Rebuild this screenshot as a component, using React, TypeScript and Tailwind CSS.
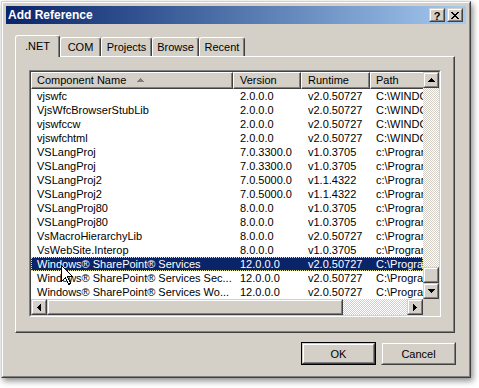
import React from "react";

type Row = [string, string, string, string];
const W = "C:\\WINDOWS";
const P = "c:\\Program";
const S = "C:\\Program";

const rows: Row[] = [
  ["vjswfc", "2.0.0.0", "v2.0.50727", W],
  ["VjsWfcBrowserStubLib", "2.0.0.0", "v2.0.50727", W],
  ["vjswfccw", "2.0.0.0", "v2.0.50727", W],
  ["vjswfchtml", "2.0.0.0", "v2.0.50727", W],
  ["VSLangProj", "7.0.3300.0", "v1.0.3705", P],
  ["VSLangProj", "7.0.3300.0", "v1.0.3705", P],
  ["VSLangProj2", "7.0.5000.0", "v1.1.4322", P],
  ["VSLangProj2", "7.0.5000.0", "v1.1.4322", P],
  ["VSLangProj80", "8.0.0.0", "v1.0.3705", P],
  ["VSLangProj80", "8.0.0.0", "v1.0.3705", P],
  ["VsMacroHierarchyLib", "8.0.0.0", "v2.0.50727", P],
  ["VsWebSite.Interop", "8.0.0.0", "v1.0.3705", P],
  ["Windows® SharePoint® Services", "12.0.0.0", "v2.0.50727", S],
  ["Windows® SharePoint® Services Sec...", "12.0.0.0", "v2.0.50727", S],
  ["Windows® SharePoint® Services Wo...", "12.0.0.0", "v2.0.50727", S],
];

const SELECTED = 12;

function Arrow({ dir }: { dir: "up" | "down" | "left" | "right" }) {
  const widths = [1, 3, 5, 7];
  if (dir === "up" || dir === "down") {
    return (
      <svg width="7" height="4" viewBox="0 0 7 4" shapeRendering="crispEdges">
        {widths.map((w, i) => (
          <rect key={i} x={(7 - w) / 2} y={dir === "up" ? i : 3 - i} width={w} height={1} fill="#000" />
        ))}
      </svg>
    );
  }
  return (
    <svg width="4" height="7" viewBox="0 0 4 7" shapeRendering="crispEdges">
      {widths.map((w, i) => (
        <rect key={i} y={(7 - w) / 2} x={dir === "left" ? i : 3 - i} height={w} width={1} fill="#000" />
      ))}
    </svg>
  );
}

function Raised({ className, children }: { className: string; children?: React.ReactNode }) {
  return (
    <div className={`border border-t-[#d4d0c8] border-l-[#d4d0c8] border-r-[#404040] border-b-[#404040] ${className}`}>
      <div className="w-full h-full border border-t-white border-l-white border-r-[#808080] border-b-[#808080] bg-[#d4d0c8] flex items-center justify-center">
        {children}
      </div>
    </div>
  );
}

function HeaderCell({ w, pl, children }: { w: string; pl: string; children: React.ReactNode }) {
  return (
    <div className={`${w} shrink-0 h-[17px] border border-t-white border-l-white border-r-[#404040] border-b-[#404040]`}>
      <div className={`h-full border-r border-b border-[#808080] flex items-center ${pl} whitespace-nowrap overflow-hidden`}>
        {children}
      </div>
    </div>
  );
}

function Tab({ label, w, selected }: { label: string; w: string; selected?: boolean }) {
  return (
    <div
      className={`${w} ${
        selected ? "h-[22px] -mb-px relative z-10" : "h-[19px]"
      } shrink-0 bg-[#d4d0c8] border-t border-l border-r border-t-white border-l-white border-r-[#404040] rounded-t-[3px] shadow-[inset_-1px_0_#808080] flex items-center justify-center ${
        selected ? "pb-[2px]" : ""
      }`}
    >
      {label}
    </div>
  );
}

function Button({ label, isDefault }: { label: string; isDefault?: boolean }) {
  return isDefault ? (
    <div className="w-[75px] h-[23px] border border-black">
      <Raised className="w-full h-full">
        <span>{label}</span>
      </Raised>
    </div>
  ) : (
    <div className="w-[75px] h-[23px]">
      <Raised className="w-full h-full">
        <span>{label}</span>
      </Raised>
    </div>
  );
}

const track =
  "bg-[image:repeating-conic-gradient(#d4d0c8_0%_25%,#ffffff_0%_50%)] bg-[length:2px_2px]";

export default function App() {
  return (
    <div className="w-[479px] h-[388px] bg-white relative overflow-hidden font-['Liberation_Sans',Arial,sans-serif] text-[11px] text-black leading-[14px]">
      <div className="absolute left-[1px] top-[1px] w-[470px] h-[377px] shadow-[2px_3px_6px_rgba(0,0,0,0.45)] border border-t-[#d4d0c8] border-l-[#d4d0c8] border-r-[#404040] border-b-[#404040]">
        <div className="w-full h-full bg-[#d4d0c8] border border-t-white border-l-white border-r-[#808080] border-b-[#808080] p-[3px] flex flex-col">
          {/* Title bar */}
          <div className="h-[18px] shrink-0 flex items-center bg-linear-to-r from-[#0a246a] to-[#a6caf0] pl-[2px] pr-[3px]">
            <span className="text-white font-bold text-[12px] leading-[14px]">Add Reference</span>
            <div className="ml-auto flex gap-[2px]">
              <Raised className="w-[16px] h-[14px]">
                <span className="font-bold text-[11px] leading-[10px] mt-[1px]">?</span>
              </Raised>
              <Raised className="w-[16px] h-[14px]">
                <svg width="8" height="7" viewBox="0 0 8 7" shapeRendering="crispEdges">
                  {[0, 1, 2, 3, 4, 5, 6].map((y) => {
                    const xs = [[0, 6], [1, 5], [2, 4], [3, 3], [2, 4], [1, 5], [0, 6]][y];
                    return (
                      <g key={y}>
                        <rect x={xs[0]} y={y} width={2} height={1} fill="#000" />
                        {xs[0] !== xs[1] && <rect x={xs[1]} y={y} width={2} height={1} fill="#000" />}
                      </g>
                    );
                  })}
                </svg>
              </Raised>
            </div>
          </div>

          {/* Content */}
          <div className="flex flex-col px-[9px]">
            <div className="mt-[11px] h-[21px] flex items-end">
              <Tab label=".NET" w="w-[45px]" selected />
              <Tab label="COM" w="w-[41px]" />
              <Tab label="Projects" w="w-[51px]" />
              <Tab label="Browse" w="w-[47px]" />
              <Tab label="Recent" w="w-[46px]" />
            </div>

            {/* Tab panel */}
            <div className="w-[440px] h-[277px] border border-t-white border-l-white border-r-[#404040] border-b-[#404040]">
              <div className="w-full h-full border-r border-b border-[#808080] pl-[13px] pt-[13px]">
                {/* List view */}
                <div className="w-[412px] h-[247px] border border-t-[#808080] border-l-[#808080] border-r-white border-b-white">
                  <div className="w-full h-full border border-t-[#404040] border-l-[#404040] border-r-[#d4d0c8] border-b-[#d4d0c8] bg-white flex flex-col">
                    <div className="flex">
                      <div className="w-[392px] overflow-hidden">
                        <div className="flex bg-[#d4d0c8] w-[392px]">
                          <HeaderCell w="w-[202px]" pl="pl-[5px]">
                            <span>Component Name</span>
                            <svg className="ml-[11px]" width="7" height="4" viewBox="0 0 7 4" shapeRendering="crispEdges">
                              {[1, 3, 5, 7].map((w, i) => (
                                <rect key={i} x={(7 - w) / 2} y={i} width={w} height={1} fill="#808080" />
                              ))}
                            </svg>
                          </HeaderCell>
                          <HeaderCell w="w-[68px]" pl="pl-[6px]">Version</HeaderCell>
                          <HeaderCell w="w-[69px]" pl="pl-[6px]">Runtime</HeaderCell>
                          <HeaderCell w="w-[60px]" pl="pl-[5px]">Path</HeaderCell>
                        </div>
                        {rows.map((r, i) => {
                          const sel = i === SELECTED;
                          return (
                            <div
                              key={i}
                              className={`flex h-[14px] w-[392px] ${
                                sel
                                  ? "bg-[#0a246a] text-white outline-1 outline-dotted outline-[#e4e4a0] -outline-offset-1"
                                  : ""
                              }`}
                            >
                              <div className="w-[202px] shrink-0 pl-[6px] whitespace-nowrap overflow-hidden">{r[0]}</div>
                              <div className="w-[68px] shrink-0 pl-[7px] whitespace-nowrap overflow-hidden">{r[1]}</div>
                              <div className="w-[69px] shrink-0 pl-[7px] whitespace-nowrap overflow-hidden">{r[2]}</div>
                              <div className="w-[53px] shrink-0 pl-[6px] whitespace-nowrap overflow-hidden">{r[3]}</div>
                            </div>
                          );
                        })}
                      </div>
                      {/* Vertical scrollbar */}
                      <div className="w-[16px] h-[227px] flex flex-col">
                        <Raised className="w-[16px] h-[16px] shrink-0">
                          <Arrow dir="up" />
                        </Raised>
                        <div className={`flex-1 ${track}`} />
                        <Raised className="w-[16px] h-[16px] shrink-0" />
                        <Raised className="w-[16px] h-[16px] shrink-0">
                          <Arrow dir="down" />
                        </Raised>
                      </div>
                    </div>
                    {/* Horizontal scrollbar */}
                    <div className="flex h-[16px]">
                      <Raised className="w-[16px] h-[16px] shrink-0">
                        <Arrow dir="left" />
                      </Raised>
                      <Raised className="w-[296px] h-[16px] shrink-0" />
                      <div className={`w-[64px] h-[16px] ${track}`} />
                      <Raised className="w-[16px] h-[16px] shrink-0">
                        <Arrow dir="right" />
                      </Raised>
                      <div className="w-[16px] h-[16px] bg-[#d4d0c8]" />
                    </div>
                  </div>
                </div>
              </div>
            </div>

            {/* Buttons */}
            <div className="w-[441px] mt-[9px] flex justify-end gap-[5px]">
              <Button label="OK" isDefault />
              <Button label="Cancel" />
            </div>
          </div>
        </div>
      </div>

      {/* Mouse cursor */}
      <svg className="absolute left-[61px] top-[265px]" width="12" height="20" viewBox="0 0 12 20" shapeRendering="crispEdges">
        <path d="M0.5 0.5 V16.5 L4.5 12.5 L7.5 19.5 L9.5 18.5 L6.5 11.5 H11.5 Z" fill="#fff" stroke="#000" strokeWidth="1" />
      </svg>
    </div>
  );
}
